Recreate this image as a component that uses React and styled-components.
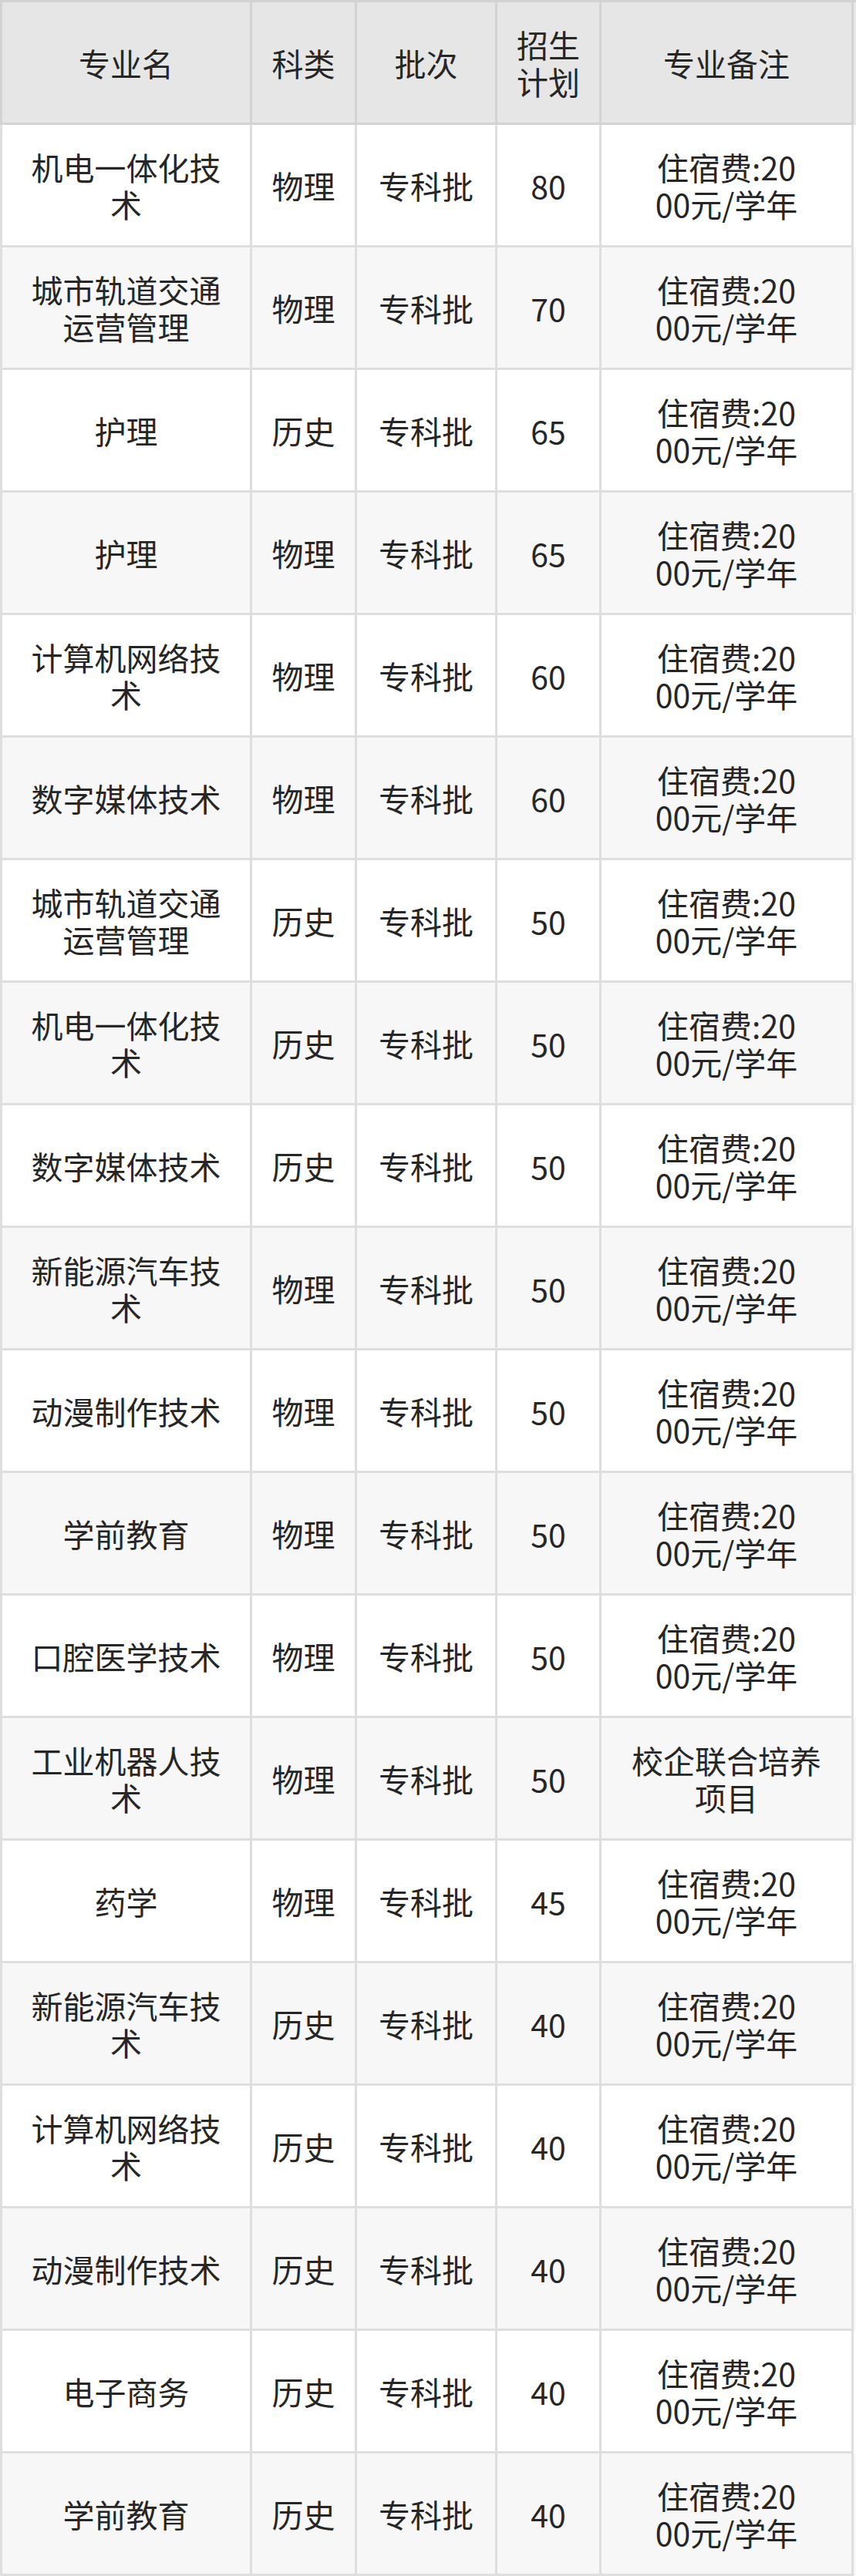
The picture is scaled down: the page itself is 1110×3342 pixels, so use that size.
import React from "react";
import styled, { createGlobalStyle } from "styled-components";

const GlobalStyle = createGlobalStyle`
  html, body {
    margin: 0;
    padding: 0;
    background: #ffffff;
  }
  body {
    font-family: "Noto Sans CJK SC", "Noto Sans", sans-serif;
    color: #262626;
  }
`;

const columns = "327px 136px 182px 135px 327px";

const Table = styled.div`
  width: 1110px;
  display: flex;
  flex-direction: column;
`;

const Row = styled.div`
  display: grid;
  grid-template-columns: ${columns};
  background: ${(p) => (p.$head ? "#e6e6e6" : p.$alt ? "#f7f7f7" : "#ffffff")};
  border-top: ${(p) => (p.$head ? "3px solid #d3d3d3" : "none")};
`;

const Cell = styled.div`
  box-sizing: border-box;
  height: 159px;
  display: flex;
  align-items: center;
  justify-content: center;
  text-align: center;
  padding: 0 ${(p) => p.$pad || 24}px;
  font-size: 41px;
  line-height: 48px;
  white-space: pre-line;
  word-break: break-all;
  border-right: 3px solid ${(p) => (p.$head ? "#d3d3d3" : "#dedede")};
  border-bottom: 3px solid ${(p) => (p.$head ? "#d3d3d3" : "#dedede")};

  &:first-child {
    border-left: 3px solid ${(p) => (p.$head ? "#d3d3d3" : "#dedede")};
  }
`;

const fee = "住宿费:20\n00元/学年";

const rows = [
  ["机电一体化技术", "物理", "专科批", "80", fee],
  ["城市轨道交通运营管理", "物理", "专科批", "70", fee],
  ["护理", "历史", "专科批", "65", fee],
  ["护理", "物理", "专科批", "65", fee],
  ["计算机网络技术", "物理", "专科批", "60", fee],
  ["数字媒体技术", "物理", "专科批", "60", fee],
  ["城市轨道交通运营管理", "历史", "专科批", "50", fee],
  ["机电一体化技术", "历史", "专科批", "50", fee],
  ["数字媒体技术", "历史", "专科批", "50", fee],
  ["新能源汽车技术", "物理", "专科批", "50", fee],
  ["动漫制作技术", "物理", "专科批", "50", fee],
  ["学前教育", "物理", "专科批", "50", fee],
  ["口腔医学技术", "物理", "专科批", "50", fee],
  ["工业机器人技术", "物理", "专科批", "50", "校企联合培养\n项目"],
  ["药学", "物理", "专科批", "45", fee],
  ["新能源汽车技术", "历史", "专科批", "40", fee],
  ["计算机网络技术", "历史", "专科批", "40", fee],
  ["动漫制作技术", "历史", "专科批", "40", fee],
  ["电子商务", "历史", "专科批", "40", fee],
  ["学前教育", "历史", "专科批", "40", fee],
];

const heads = ["专业名", "科类", "批次", "招生计划", "专业备注"];
const pads = [24, 10, 10, 16, 12];

export default function App() {
  return (
    <>
      <GlobalStyle />
      <Table>
        <Row $head>
          {heads.map((h, i) => (
            <Cell $head key={i} $pad={pads[i]}>
              {h}
            </Cell>
          ))}
        </Row>
        {rows.map((r, i) => (
          <Row key={i} $alt={i % 2 === 1}>
            {r.map((c, j) => (
              <Cell key={j} $pad={pads[j]}>
                {c}
              </Cell>
            ))}
          </Row>
        ))}
      </Table>
    </>
  );
}
